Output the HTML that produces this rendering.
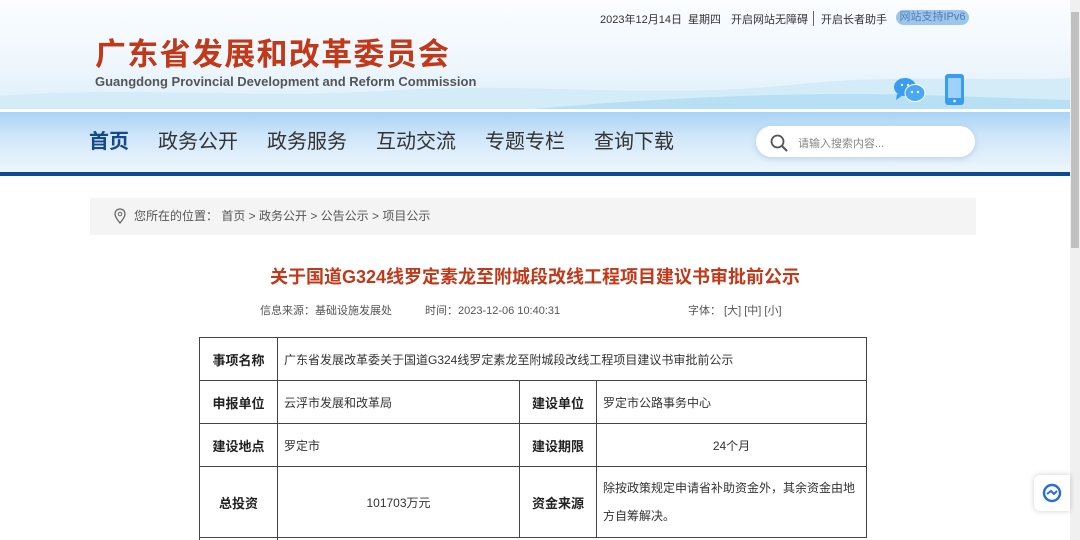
<!DOCTYPE html>
<html><head><meta charset="utf-8"><style>
*{margin:0;padding:0;box-sizing:border-box}
html,body{width:1080px;height:540px;overflow:hidden}
body{background:#fff;font-family:"Liberation Sans","Noto Sans CJK SC",sans-serif;position:relative}
.hdr{position:absolute;left:0;top:0;width:1070px;height:112px;background:linear-gradient(180deg,#fbfdff 0%,#eef6fc 60%,#d9eefa 100%)}
.mtn{position:absolute;left:0;top:60px;width:1070px;height:52px}
.nav{position:absolute;left:0;top:112px;width:1070px;height:60px;background:linear-gradient(180deg,#a9d3f5 0%,#cfe6f9 40%,#eef6fd 100%)}
.nav span{position:absolute;top:18px;font-size:20px;line-height:24px;color:#333}
.line{position:absolute;left:0;top:172px;width:1070px;height:4px;background:#0e4a94}
.title{position:absolute;left:95px;top:38px;font-size:31px;line-height:34px;font-weight:bold;color:#c1381a;letter-spacing:1.3px;text-shadow:1px 1px 1px #fff}
.en{position:absolute;left:95px;top:74px;font-size:13px;line-height:15px;font-weight:bold;color:#555}
.top{position:absolute;top:11px;font-size:11px;color:#333}
.scroll{position:absolute;left:1070px;top:0;width:10px;height:540px;background:#f0f0f0}
.bc{position:absolute;left:90px;top:198px;width:886px;height:37px;background:#f4f4f4;font-size:12px;color:#555;line-height:37px;padding-left:44px}
h1{position:absolute;left:0;width:1070px;top:265px;text-align:center;font-size:18px;line-height:24px;color:#c1381a;font-weight:bold}
.meta{position:absolute;top:302px;font-size:11px;color:#555}
table{position:absolute;left:199px;top:337px;border-collapse:collapse;width:668px;font-size:12px;color:#333}
td{border:1px solid #444;height:43px;padding:0 6px}
td.k{font-weight:bold;text-align:center;color:#222;font-size:13px}
</style></head><body>
<div class="hdr"></div>
<svg class="mtn" viewBox="0 0 1070 52" preserveAspectRatio="none"><path d="M0 36 C150 26 250 40 400 30 C550 22 650 40 800 24 C900 14 1000 22 1070 18 L1070 52 L0 52Z" fill="#d3ecf8"/><path d="M500 52 C650 38 800 30 950 36 L1070 40 L1070 52Z" fill="#b7e0f4"/><rect y="49" width="1070" height="3" fill="#fff"/></svg>
<div class="title">广东省发展和改革委员会</div>
<div class="en">Guangdong Provincial Development and Reform Commission</div>
<div class="top" style="left:600px">2023年12月14日&nbsp; 星期四</div>
<div class="top" style="left:731px">开启网站无障碍</div>
<div style="position:absolute;left:813px;top:11px;width:1px;height:15px;background:#666"></div>
<div class="top" style="left:821px">开启长者助手</div>
<div style="position:absolute;left:896px;top:10px;width:73px;height:15px;border-radius:8px;background:#9cc6ea;color:#4d7fb8;font-size:11px;line-height:15px;text-align:center">网站支持IPv6</div>
<svg style="position:absolute;left:893px;top:76px" width="34" height="28"><ellipse cx="12" cy="11" rx="11" ry="9" fill="#3a9cf0"/><path d="M4 18 L3 24 L10 19Z" fill="#3a9cf0"/><ellipse cx="22" cy="17" rx="10" ry="8.5" fill="#4aa8f5" stroke="#fff" stroke-width="1"/><circle cx="19" cy="16" r="1.2" fill="#fff"/><circle cx="25" cy="16" r="1.2" fill="#fff"/><circle cx="9" cy="9" r="1.2" fill="#fff"/><circle cx="15" cy="9" r="1.2" fill="#fff"/></svg>
<svg style="position:absolute;left:945px;top:74px" width="19" height="31"><rect x="0" y="0" width="19" height="31" rx="3" fill="#3a9cf0"/><rect x="3" y="4" width="13" height="20" fill="#9fd2fa"/><circle cx="9.5" cy="27" r="1.3" fill="#fff"/></svg>
<div class="nav">
<span style="left:89px;color:#144a8c;font-weight:bold">首页</span>
<span style="left:158px">政务公开</span><span style="left:267px">政务服务</span><span style="left:376px">互动交流</span><span style="left:485px">专题专栏</span><span style="left:594px">查询下载</span>
<div style="position:absolute;left:756px;top:14px;width:219px;height:31px;border-radius:16px;background:#fff;box-shadow:0 2px 6px rgba(100,150,200,.3)"></div>
<svg style="position:absolute;left:770px;top:22px" width="18" height="18"><circle cx="7.5" cy="7.5" r="6" fill="none" stroke="#555" stroke-width="1.8"/><path d="M12 12 L17 17" stroke="#555" stroke-width="2"/></svg>
<div style="position:absolute;left:798px;top:23px;font-size:11px;color:#888">请输入搜索内容...</div>
</div>
<div class="line"></div>
<div class="scroll"><div style="position:absolute;left:1px;top:12px;width:8px;height:236px;background:#c1c1c1"></div></div>
<div class="bc"><svg style="position:absolute;left:24px;top:10px" width="12" height="16"><path d="M6 1 C2.5 1 1 3.5 1 6 C1 9 6 15 6 15 C6 15 11 9 11 6 C11 3.5 9.5 1 6 1Z" fill="none" stroke="#666" stroke-width="1.3"/><circle cx="6" cy="6" r="1.8" fill="none" stroke="#666"/></svg>您所在的位置：&nbsp;首页 &gt; 政务公开 &gt; 公告公示 &gt; 项目公示</div>
<h1>关于国道G324线罗定素龙至附城段改线工程项目建议书审批前公示</h1>
<div class="meta" style="left:260px">信息来源：基础设施发展处</div>
<div class="meta" style="left:425px">时间：2023-12-06 10:40:31</div>
<div class="meta" style="left:688px">字体：&nbsp;[大] [中] [小]</div>
<table>
<tr><td class="k" style="width:78px">事项名称</td><td colspan="3">广东省发展改革委关于国道G324线罗定素龙至附城段改线工程项目建议书审批前公示</td></tr>
<tr><td class="k">申报单位</td><td style="width:242px">云浮市发展和改革局</td><td class="k" style="width:77px">建设单位</td><td>罗定市公路事务中心</td></tr>
<tr><td class="k">建设地点</td><td>罗定市</td><td class="k">建设期限</td><td style="text-align:center">24个月</td></tr>
<tr><td class="k" style="height:71px">总投资</td><td style="text-align:center">101703万元</td><td class="k">资金来源</td><td style="line-height:28px">除按政策规定申请省补助资金外，其余资金由地方自筹解决。</td></tr>
</table>
<div style="position:absolute;left:199px;top:537px;width:1px;height:3px;background:#444"></div>
<div style="position:absolute;left:277px;top:537px;width:1px;height:3px;background:#444"></div>
<div style="position:absolute;left:1034px;top:475px;width:36px;height:36px;background:#fff;border-radius:6px 0 0 6px;box-shadow:0 0 6px rgba(0,0,0,.2)"><svg style="margin:8px" width="20" height="20"><circle cx="10" cy="10" r="8" fill="none" stroke="#2a6fd6" stroke-width="2.5"/><path d="M5 11 L9 8 L12 11 L15 8" fill="none" stroke="#2a6fd6" stroke-width="2"/></svg></div>
</body></html>
